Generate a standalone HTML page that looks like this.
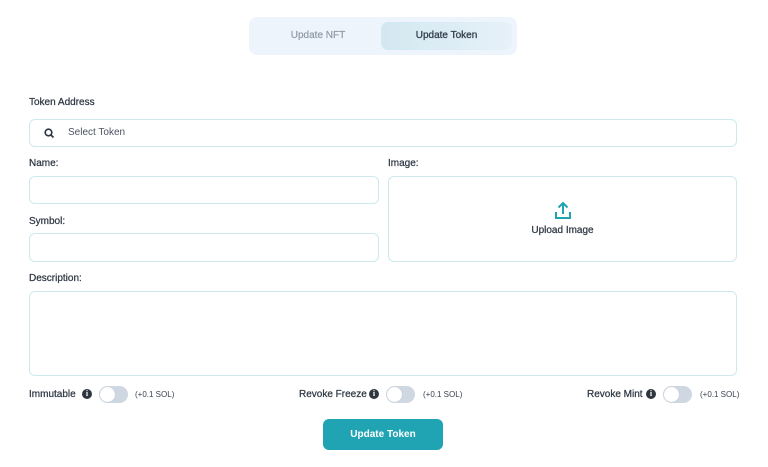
<!DOCTYPE html>
<html><head><style>
*{box-sizing:border-box;margin:0;padding:0}
body{width:768px;height:467px;background:#fff;font-family:"Liberation Sans",sans-serif;position:relative;overflow:hidden;color:#2b3440}
.a{position:absolute}
.lbl{font-size:10px;color:#2f3844;-webkit-text-stroke:0.25px #2f3844}
.box{position:absolute;border:1.5px solid #cde9ee;border-radius:6px;background:#fff}
.tg{position:absolute;width:29px;height:17px;border-radius:9px;background:#cfd8e2}
.tg:after{content:"";position:absolute;left:1px;top:1px;width:15px;height:15px;border-radius:50%;background:#fff;box-shadow:0 0 1px rgba(0,0,0,.2)}
.i{position:absolute;width:10px;height:10px;border-radius:50%;background:#2f3640;color:#fff;font-size:8px;font-weight:bold;text-align:center;line-height:10px;font-family:"Liberation Serif",serif}
.sol{font-size:8px;color:#3a4350}
</style></head><body>
<div class="a" style="left:249px;top:17px;width:268px;height:38px;background:#eef4fc;border-radius:8px"></div>
<div class="a" style="left:381px;top:22px;width:131px;height:28px;background:linear-gradient(90deg,#d3e8f1,#e6f1f8);border-radius:7px"></div>
<div class="a" style="left:249px;top:30px;width:138px;text-align:center;font-size:10px;color:#8e99a6;-webkit-text-stroke:0.2px #8e99a6">Update NFT</div>
<div class="a" style="left:381px;top:30px;width:131px;text-align:center;font-size:10px;color:#34404d;-webkit-text-stroke:0.3px #34404d">Update Token</div>

<div class="a lbl" style="left:29px;top:97px">Token Address</div>
<div class="box" style="left:29px;top:119px;width:708px;height:28px"></div>
<svg class="a" style="left:44px;top:128px" width="11" height="11" viewBox="0 0 11 11"><circle cx="4.5" cy="4.5" r="3.3" fill="none" stroke="#2b3440" stroke-width="1.6"/><path d="M7 7L9.5 9.5" stroke="#2b3440" stroke-width="1.6"/></svg>
<div class="a" style="left:68px;top:127px;font-size:10px;color:#4a5360">Select Token</div>

<div class="a lbl" style="left:29px;top:158px">Name:</div>
<div class="box" style="left:29px;top:176px;width:350px;height:28px"></div>
<div class="a lbl" style="left:29px;top:216px">Symbol:</div>
<div class="box" style="left:29px;top:233px;width:350px;height:29px"></div>
<div class="a lbl" style="left:388px;top:158px">Image:</div>
<div class="box" style="left:388px;top:176px;width:349px;height:86px"></div>
<svg class="a" style="left:554px;top:201px" width="18" height="19" viewBox="0 0 18 19"><path d="M9 13V2M4.5 6.5L9 2l4.5 4.5M2 11v6h14v-6" fill="none" stroke="#20a3b3" stroke-width="2"/></svg>
<div class="a lbl" style="left:388px;top:225px;width:349px;text-align:center">Upload Image</div>

<div class="a lbl" style="left:29px;top:273px">Description:</div>
<div class="box" style="left:29px;top:291px;width:708px;height:85px"></div>

<div class="a lbl" style="left:29px;top:389px">Immutable</div>
<div class="i" style="left:82px;top:389px">i</div>
<div class="tg" style="left:99px;top:386px"></div>
<div class="a sol" style="left:135px;top:390px">(+0.1 SOL)</div>

<div class="a lbl" style="left:299px;top:389px">Revoke Freeze</div>
<div class="i" style="left:369px;top:389px">i</div>
<div class="tg" style="left:386px;top:386px"></div>
<div class="a sol" style="left:423px;top:390px">(+0.1 SOL)</div>

<div class="a lbl" style="left:587px;top:389px">Revoke Mint</div>
<div class="i" style="left:646px;top:389px">i</div>
<div class="tg" style="left:663px;top:386px"></div>
<div class="a sol" style="left:700px;top:390px">(+0.1 SOL)</div>

<div class="a" style="left:323px;top:419px;width:120px;height:31px;background:#20a3b3;border-radius:6px;color:#fff;font-size:10px;font-weight:bold;text-align:center;line-height:31px">Update Token</div>
</body></html>
